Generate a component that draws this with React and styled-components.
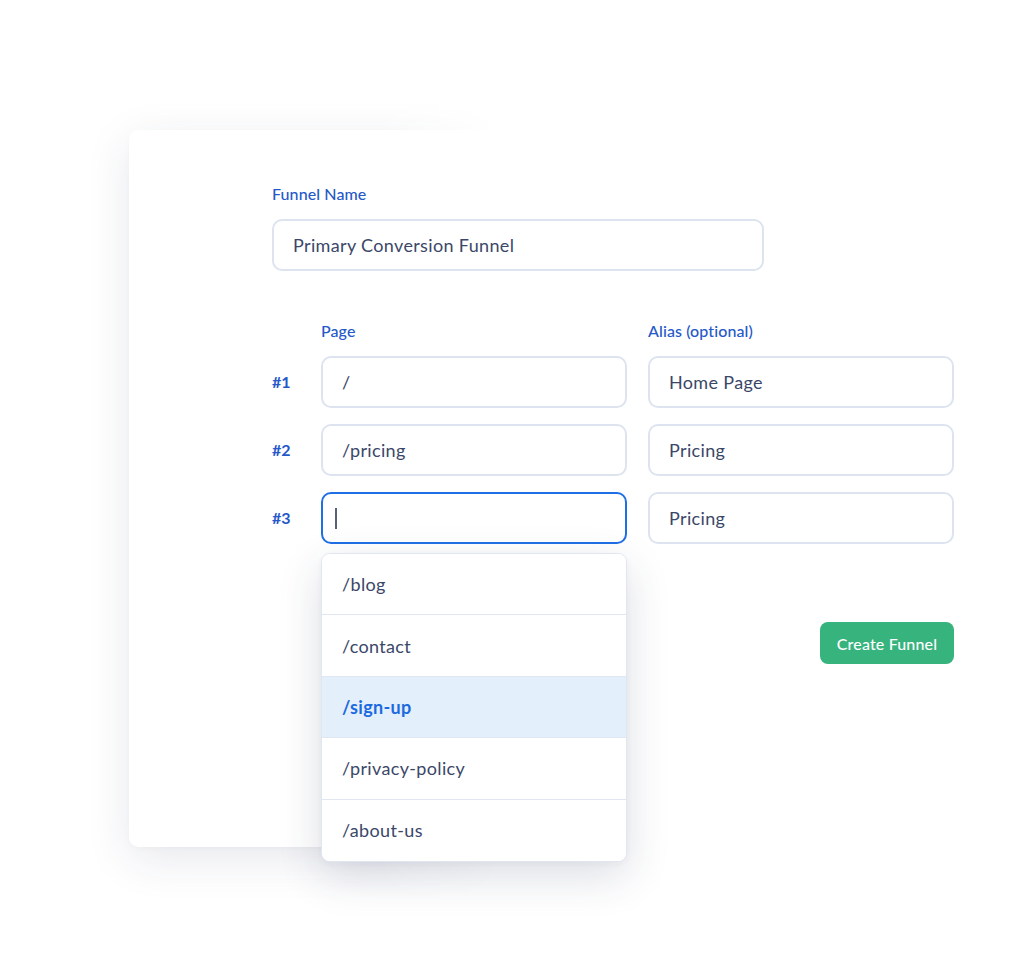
import React from "react";
import styled, { createGlobalStyle } from "styled-components";

const Global = createGlobalStyle`
  html, body { margin: 0; padding: 0; background: #ffffff; }
  body { font-family: Lato, "Open Sans", "Noto Sans", sans-serif; overflow: hidden; }
  * { box-sizing: border-box; }
`;

const Page = styled.div`
  width: 1024px;
  height: 977px;
  padding: 130px 0 0 129px;
  overflow: hidden;
`;

const Card = styled.div`
  position: relative;
  width: 1000px;
  height: 717px;
  padding: 55px 0 0 143px;
  border-radius: 10px;
`;

/* decorative soft shadow that fades out towards the right */
const CardShadow = styled.div`
  position: absolute;
  inset: -80px;
  pointer-events: none;
  -webkit-mask-image: linear-gradient(to right, #000 0, #000 330px, transparent 450px);
  mask-image: linear-gradient(to right, #000 0, #000 330px, transparent 450px);
  z-index: 0;
`;

const ShadowBox = styled.div`
  position: absolute;
  inset: 80px;
  border-radius: 10px;
  background: #fff;
  box-shadow: 0 12px 46px rgba(40, 50, 90, 0.11), 0 2px 8px rgba(40, 50, 90, 0.03);
`;

const CardFill = styled.div`
  position: absolute;
  inset: 0;
  border-radius: 10px;
  background: #fff;
  z-index: 0;
`;

const Content = styled.div`
  position: relative;
  z-index: 1;
`;

const Label = styled.div`
  font-size: 16px;
  line-height: 18px;
  font-weight: 500;
  letter-spacing: 0.1px;
  color: #2558c8;
  margin-bottom: 16px;
`;

const Field = styled.div`
  display: flex;
  align-items: center;
  width: ${(p) => p.$w || "100%"};
  height: 52px;
  padding: 0 19px;
  border: 2px solid ${(p) => (p.$focused ? "#1f6fe5" : "#dde4f0")};
  border-radius: 10px;
  background: #fff;
  font-size: 18px;
  letter-spacing: 0.35px;
  color: #3b4768;
  white-space: nowrap;
`;

const Caret = styled.span`
  display: inline-block;
  width: 2px;
  height: 21px;
  background: #566178;
  margin-left: -7px;
`;

const Steps = styled.div`
  margin-top: 51px;
  width: 682px;
  display: flex;
  flex-direction: column;
  gap: 16px;
`;

const Row = styled.div`
  display: flex;
  align-items: ${(p) => (p.$head ? "flex-end" : "center")};
`;

const NumCol = styled.div`
  width: 49px;
  flex: none;
  font-size: 16px;
  font-weight: 700;
  color: #2558c8;
  padding-bottom: 2px;
`;

const Col = styled.div`
  position: relative;
  width: 306px;
  flex: none;
  margin-left: ${(p) => (p.$alias ? 21 : 0)}px;
`;

const HeadLabel = styled(Label)`
  margin-bottom: 0;
`;

const Dropdown = styled.div`
  position: absolute;
  top: calc(100% + 9px);
  left: 0;
  width: 100%;
  background: #fff;
  border: 1.5px solid #e1e7f1;
  border-radius: 9px;
  overflow: hidden;
  box-shadow: 0 14px 44px rgba(40, 50, 90, 0.16), 0 2px 6px rgba(40, 50, 90, 0.04);
  z-index: 5;
`;

const Option = styled.div`
  height: 61.4px;
  display: flex;
  align-items: center;
  padding: 0 20px;
  font-size: 18px;
  letter-spacing: 0.35px;
  font-weight: ${(p) => (p.$active ? 700 : 400)};
  color: ${(p) => (p.$active ? "#1b6ae0" : "#3b4768")};
  background: ${(p) => (p.$active ? "#e4effc" : "#fff")};
  border-bottom: 1.5px solid #e1e7f1;
  &:last-child { border-bottom: none; }
`;

const Actions = styled.div`
  display: flex;
  justify-content: flex-end;
  margin-top: 62px;
`;

const Button = styled.button`
  width: 134px;
  height: 42px;
  border: none;
  border-radius: 8px;
  background: #37b37e;
  color: #fff;
  font-family: inherit;
  font-size: 16px;
  font-weight: 500;
  letter-spacing: 0.15px;
  cursor: pointer;
`;

const rows = [
  { n: "#1", page: "/", alias: "Home Page" },
  { n: "#2", page: "/pricing", alias: "Pricing" },
  { n: "#3", page: "", alias: "Pricing", focused: true },
];

const options = ["/blog", "/contact", "/sign-up", "/privacy-policy", "/about-us"];

export default function App() {
  return (
    <>
      <Global />
      <Page>
        <Card>
          <CardShadow>
            <ShadowBox />
          </CardShadow>
          <CardFill />
          <Content>
            <Label>Funnel Name</Label>
            <Field $w="492px">Primary Conversion Funnel</Field>
            <Steps>
              <Row $head>
                <NumCol />
                <Col>
                  <HeadLabel>Page</HeadLabel>
                </Col>
                <Col $alias>
                  <HeadLabel>Alias (optional)</HeadLabel>
                </Col>
              </Row>
              {rows.map((r) => (
                <Row key={r.n}>
                  <NumCol>{r.n}</NumCol>
                  <Col>
                    <Field $focused={r.focused}>
                      {r.focused ? <Caret /> : r.page}
                    </Field>
                    {r.focused && (
                      <Dropdown>
                        {options.map((o) => (
                          <Option key={o} $active={o === "/sign-up"}>
                            {o}
                          </Option>
                        ))}
                      </Dropdown>
                    )}
                  </Col>
                  <Col $alias>
                    <Field>{r.alias}</Field>
                  </Col>
                </Row>
              ))}
              <Actions>
                <Button>Create Funnel</Button>
              </Actions>
            </Steps>
          </Content>
        </Card>
      </Page>
    </>
  );
}
